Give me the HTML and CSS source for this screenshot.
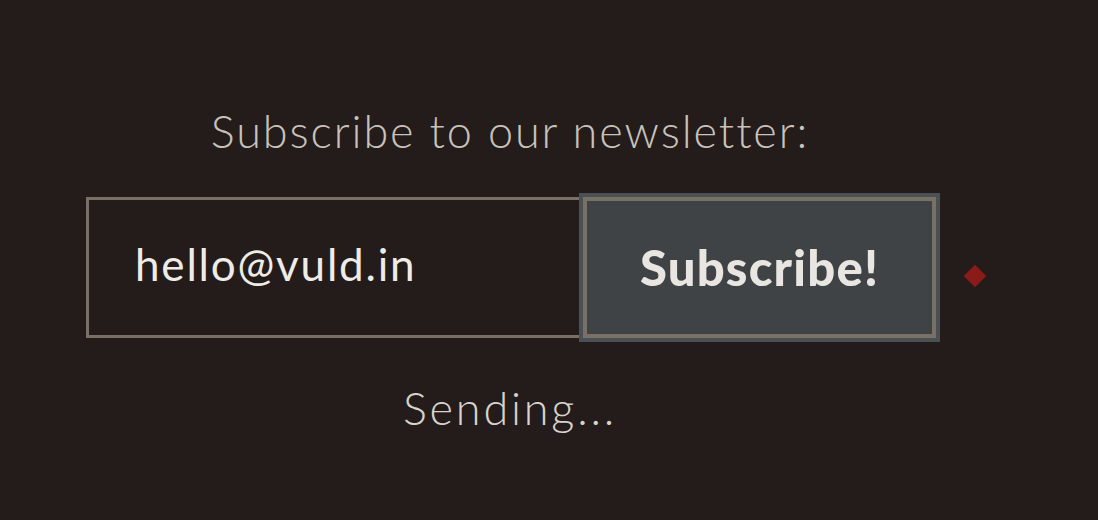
FILE: index.html
```html
<!DOCTYPE html>
<html>
<head>
<meta charset="utf-8">
<link rel="stylesheet" href="styles.css">
</head>
<body>
<div class="wrap">
  <h2 class="title">Subscribe to our newsletter:</h2>
  <form class="form">
    <input class="email" type="text" value="hello@vuld.in">
    <button class="btn" type="button">Subscribe!</button>
    <span class="dot"></span>
  </form>
  <p class="status">Sending...</p>
</div>
</body>
</html>
```
FILE: styles.css
```css
html, body {
  margin: 0;
  padding: 0;
  background: #231c1a;
  height: 100%;
}
body {
  font-family: Lato, "Open Sans", sans-serif;
}
.wrap {
  width: 854px;
  margin-left: 86px;
  padding-top: 101px;
  display: flex;
  flex-direction: column;
  align-items: center;
}
.title {
  margin: 0;
  font-weight: 300;
  font-size: 45px;
  line-height: 60px;
  letter-spacing: 1.9px;
  color: #c8c2bb;
  transform: translateX(-3px);
}
.form {
  position: relative;
  margin-top: 36px;
  display: flex;
  align-self: flex-start;
}
.email {
  box-sizing: border-box;
  width: 497px;
  height: 141px;
  border: 3px solid #7a7166;
  background: transparent;
  color: #efece8;
  font-family: Lato, "Open Sans", sans-serif;
  font-size: 44px;
  letter-spacing: 1.8px;
  padding: 0 0 8px 46px;
  margin: 0;
  outline: none;
}
.btn {
  box-sizing: border-box;
  width: 353px;
  height: 141px;
  margin: 0;
  border: 4px solid #7a7166;
  outline: 4px solid #4b5054;
  background: #3f4346;
  color: #e9e6e2;
  font-family: Lato, "Open Sans", sans-serif;
  font-weight: 900;
  font-size: 49px;
  letter-spacing: 1.2px;
  padding: 0 0 2px;
}
.dot {
  position: absolute;
  left: 881px;
  top: 71px;
  width: 16px;
  height: 16px;
  background: #8a1b19;
  transform: rotate(45deg);
}
.status {
  margin: 42px 0 0;
  font-weight: 300;
  font-size: 45px;
  line-height: 56px;
  letter-spacing: 2.8px;
  color: #d8d3cd;
  transform: translateX(-3px);
}
```
